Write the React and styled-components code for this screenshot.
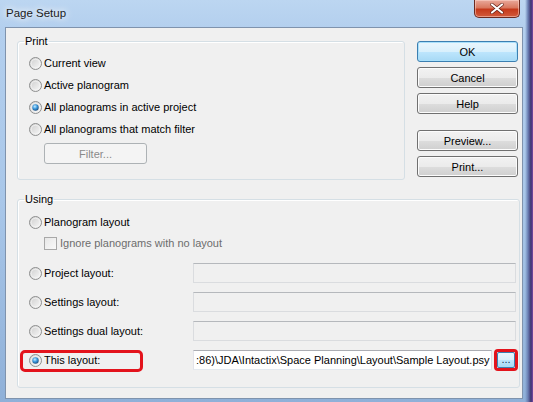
import styled, { createGlobalStyle } from "styled-components";

const GlobalStyle = createGlobalStyle`
  html, body {
    margin: 0;
    padding: 0;
  }
  body {
    width: 533px;
    height: 402px;
    overflow: hidden;
    background: #4b3f7e;
    font-family: "Liberation Sans", Arial, sans-serif;
    font-size: 11px;
    color: #000;
  }
  * {
    box-sizing: border-box;
  }
`;

const layoutRows = [
    { label: "Project layout:", value: "" },
    { label: "Settings layout:", value: "" },
    { label: "Settings dual layout:", value: "" },
];

function RadioIcon({ checked }) {
    return (
        <svg width="13" height="13" viewBox="0 0 13 13">
            <defs>
                <linearGradient id="radioFill" x1="0" y1="0" x2="1" y2="1">
                    <stop offset="0" stopColor="#cbcbcb" />
                    <stop offset="1" stopColor="#fbfbfb" />
                </linearGradient>
                <radialGradient id="radioDot" cx="0.4" cy="0.35" r="0.75">
                    <stop offset="0" stopColor="#c9ecff" />
                    <stop offset="0.45" stopColor="#3c9be0" />
                    <stop offset="1" stopColor="#173f6d" />
                </radialGradient>
            </defs>
            <circle cx="6.5" cy="6.5" r="6" fill="url(#radioFill)" stroke="#8e8f8f" />
            <circle cx="6.5" cy="6.5" r="4.3" fill="none" stroke="#f4f4f4" strokeWidth="0.8" />
            {checked && <circle cx="6.5" cy="6.5" r="3.2" fill="url(#radioDot)" />}
        </svg>
    );
}

function CheckIcon() {
    return (
        <svg width="13" height="13" viewBox="0 0 13 13">
            <defs>
                <linearGradient id="checkFill" x1="0" y1="0" x2="1" y2="1">
                    <stop offset="0" stopColor="#e6e6e6" />
                    <stop offset="1" stopColor="#fafafa" />
                </linearGradient>
            </defs>
            <rect x="0.5" y="0.5" width="12" height="12" fill="url(#checkFill)" stroke="#a8a8a8" />
        </svg>
    );
}

function Radio({ checked, children }) {
    return (
        <RadioLabel>
            <RadioIcon checked={checked} />
            <span>{children}</span>
        </RadioLabel>
    );
}

export default function App() {
    return (
        <Window>
            <GlobalStyle />
            <TitleBar>
                <Title>Page Setup</Title>
                <CloseButton>
                    <svg width="14" height="11" viewBox="0 0 14 11">
                        <path d="M2 1.5 L12 9.5 M12 1.5 L2 9.5" stroke="#5a1a10" strokeWidth="3.4" strokeLinecap="round" />
                        <path d="M2 1.5 L12 9.5 M12 1.5 L2 9.5" stroke="#ffffff" strokeWidth="2.2" strokeLinecap="round" />
                    </svg>
                </CloseButton>
            </TitleBar>
            <Client>
                <TopRow>
                    <PrintGroup>
                        <Legend>Print</Legend>
                        <GroupBody>
                            <OptionRow><Radio>Current view</Radio></OptionRow>
                            <OptionRow><Radio>Active planogram</Radio></OptionRow>
                            <OptionRow><Radio checked>All planograms in active project</Radio></OptionRow>
                            <OptionRow><Radio>All planograms that match filter</Radio></OptionRow>
                            <FilterButton disabled>Filter...</FilterButton>
                        </GroupBody>
                    </PrintGroup>
                    <ButtonColumn>
                        <DialogButton $default>OK</DialogButton>
                        <DialogButton>Cancel</DialogButton>
                        <DialogButton>Help</DialogButton>
                        <DialogButton $gap>Preview...</DialogButton>
                        <DialogButton>Print...</DialogButton>
                    </ButtonColumn>
                </TopRow>
                <UsingGroup>
                    <Legend>Using</Legend>
                    <GroupBody $right>
                        <OptionRow $h={21}><Radio>Planogram layout</Radio></OptionRow>
                        <CheckRow>
                            <CheckIcon />
                            <span>Ignore planograms with no layout</span>
                        </CheckRow>
                        <Fields>
                            {layoutRows.map((row) => (
                                <FieldRow key={row.label}>
                                    <FieldLabel><Radio>{row.label}</Radio></FieldLabel>
                                    <TextBox $disabled>{row.value}</TextBox>
                                </FieldRow>
                            ))}
                            <FieldRow>
                                <LabelHighlight />
                                <FieldLabel><Radio checked>This layout:</Radio></FieldLabel>
                                <TextBox>:86)\JDA\Intactix\Space Planning\Layout\Sample Layout.psy</TextBox>
                                <BrowseHighlight>
                                    <BrowseButton>...</BrowseButton>
                                </BrowseHighlight>
                            </FieldRow>
                        </Fields>
                    </GroupBody>
                </UsingGroup>
            </Client>
        </Window>
    );
}

const Window = styled.div`
    width: 533px;
    height: 402px;
    display: flex;
    flex-direction: column;
    background:
        linear-gradient(90deg, rgba(0,0,0,0) 0px, rgba(0,0,0,0) 525px, #6a7fb3 528px, #3e3470 531px, #7a4aa6 533px),
        linear-gradient(180deg, #bcd6f1 0px, #b3cfee 30px, #a9c7e9 200px, #8fb0d8 402px);
`

const TitleBar = styled.div`
    height: 27px;
    flex: none;
    display: flex;
    justify-content: space-between;
    align-items: flex-start;
    padding-left: 6px;
`

const Title = styled.div`
    font-size: 11.5px;
    line-height: 26px;
    color: #1b1b1b;
    text-shadow: 0 0 6px #ffffff, 0 0 10px #ffffff;
`

const CloseButton = styled.div`
    width: 46px;
    height: 18px;
    margin-right: 13px;
    border: 1px solid #6b2a20;
    border-top: none;
    border-radius: 0 0 5px 5px;
    background: linear-gradient(180deg, #e9a99b 0%, #d9785f 45%, #c5391b 55%, #d25b3c 100%);
    box-shadow: inset 0 0 0 1px rgba(255, 220, 210, 0.5);
    display: flex;
    align-items: center;
    justify-content: center;
`

const Client = styled.div`
    flex: none;
    width: 518px;
    height: 372px;
    margin-left: 5px;
    border: 1px solid #7f93ad;
    background: #f0f0f0;
    padding: 6px 1px 0 11px;
    display: flex;
    flex-direction: column;
`

const TopRow = styled.div`
    display: flex;
    gap: 12px;
`

const Group = styled.fieldset`
    margin: 0;
    min-width: 0;
    border: 1px solid #d5dfe5;
    border-radius: 3px;
    padding: 0 0 0 6px;
    box-shadow: inset 1px 1px 0 #ffffff;
`

const PrintGroup = styled(Group)`
    width: 388px;
    height: 146px;
`

const UsingGroup = styled(Group)`
    width: 503px;
    height: 196px;
    margin-top: 12px;
`

const Legend = styled.legend`
    padding: 0 1px;
    font-size: 11px;
    line-height: 15px;
    color: #000;
`

const GroupBody = styled.div`
    display: flex;
    flex-direction: column;
    align-items: flex-start;
    padding: ${(p) => (p.$right ? "5px 3px 0 5px" : "3px 0 0 5px")};
`

const OptionRow = styled.div`
    height: ${(p) => p.$h || 22}px;
    display: flex;
    align-items: center;
`

const RadioLabel = styled.label`
    display: flex;
    align-items: center;
    gap: 2px;
    line-height: 15px;
    white-space: nowrap;
    svg {
        flex: none;
    }
`

const CheckRow = styled.div`
    height: 20px;
    display: flex;
    align-items: center;
    gap: 3px;
    margin-left: 15px;
    color: #6d6d6d;
    white-space: nowrap;
`

const FilterButton = styled.button`
    margin: 3px 0 0 15px;
    width: 103px;
    height: 21px;
    border: 1px solid #adb2b5;
    border-radius: 3px;
    background: #f4f4f4;
    color: #8a8a8a;
    font-family: inherit;
    font-size: 11px;
    padding: 0;
`

const ButtonColumn = styled.div`
    width: 101px;
    margin-top: 7px;
    display: flex;
    flex-direction: column;
    gap: 5px;
`

const DialogButton = styled.button`
    width: 101px;
    height: 21px;
    margin-top: ${(p) => (p.$gap ? "11px" : "0")};
    padding: 0;
    font-family: inherit;
    font-size: 11px;
    color: #000;
    border: 1px solid ${(p) => (p.$default ? "#3c7fb1" : "#707070")};
    border-radius: 3px;
    background: ${(p) =>
        p.$default
            ? "linear-gradient(180deg, #eaf6fd 0%, #d9f0fc 50%, #bee6fd 51%, #a7d9f5 100%)"
            : "linear-gradient(180deg, #f2f2f2 0%, #ebebeb 50%, #dddddd 51%, #cfcfcf 100%)"};
    box-shadow: inset 0 0 0 1px ${(p) => (p.$default ? "#a9e0fb" : "#fcfcfc")};
`

const Fields = styled.div`
    align-self: stretch;
    margin-top: 10px;
    display: flex;
    flex-direction: column;
    gap: 9px;
`

const FieldRow = styled.div`
    position: relative;
    height: 20px;
    display: flex;
    align-items: center;
`

const FieldLabel = styled.div`
    width: 164px;
    flex: none;
`

const TextBox = styled.div`
    flex: 1;
    min-width: 0;
    height: 20px;
    border: 1px solid;
    border-color: ${(p) => (p.$disabled ? "#b5b8bc #dadcdf #dadcdf #dadcdf" : "#abadb3 #dbdfe6 #e3e9ef #e2e3ea")};
    background: ${(p) => (p.$disabled ? "#f0f0f0" : "#ffffff")};
    padding: 0 2px;
    font-size: 11px;
    line-height: 18px;
    white-space: nowrap;
    overflow: hidden;
`

const LabelHighlight = styled.div`
    position: absolute;
    left: -9px;
    top: 0;
    width: 123px;
    height: 22px;
    border: 3px solid #e3131c;
    border-radius: 5px;
    pointer-events: none;
`

const BrowseHighlight = styled.div`
    flex: none;
    width: 24px;
    height: 22px;
    margin: 0 -2px 0 2px;
    border: 3px solid #e3131c;
    border-radius: 4px;
    display: flex;
`

const BrowseButton = styled.div`
    flex: 1;
    border: 1px solid #3c7fb1;
    border-radius: 2px;
    background: linear-gradient(180deg, #eaf6fd 0%, #d9f0fc 50%, #bee6fd 51%, #a7d9f5 100%);
    color: #10375a;
    font-size: 11px;
    line-height: 12px;
    text-align: center;
    overflow: hidden;
`
